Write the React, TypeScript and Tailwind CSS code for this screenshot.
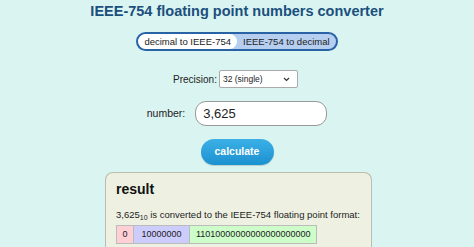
import { useState } from "react";

export default function App() {
    const [mode, setMode] = useState("dec");
    const [num, setNum] = useState("3,625");

    return (
        <div className="w-[474px] h-[247px] overflow-hidden bg-[#d9f4f1] flex flex-col items-center" style={{ fontFamily: '"Liberation Sans", Arial, sans-serif' }}>
            <h1 className="shrink-0 mt-[1px] text-[14.5px] leading-[20px] font-bold text-[#1b4f7c]">IEEE-754 floating point numbers converter</h1>

            {/* mode toggle */}
            <div className="shrink-0 mt-[11px] flex rounded-full border-2 border-[#2a62a6] bg-[#b6cff1] overflow-hidden">
                <button onClick={() => setMode("dec")} className={`h-[15px] px-[6px] text-[9.5px] leading-[15px] text-[#222] rounded-full ${mode === "dec" ? "bg-white" : ""}`}>decimal to IEEE-754</button>
                <button onClick={() => setMode("ieee")} className={`h-[15px] px-[6px] text-[9.5px] leading-[15px] text-[#222] rounded-full ${mode === "ieee" ? "bg-white" : ""}`}>IEEE-754 to decimal</button>
            </div>

            {/* precision */}
            <div className="shrink-0 mt-[19px] -ml-[3px] flex items-center gap-[2px]">
                <span className="text-[10px] text-[#222]">Precision:</span>
                <div className="relative w-[79px] h-[18px] bg-white border border-[#aaa] rounded-[2px] flex items-center">
                    <span className="pl-[3px] text-[8.5px] text-[#222]">32 (single)</span>
                    <svg className="absolute right-[7px] top-[6px]" width="7" height="5" viewBox="0 0 7 5"><path d="M1 1l2.5 2.5L6 1" stroke="#333" strokeWidth="1.2" fill="none" /></svg>
                </div>
            </div>

            {/* number */}
            <div className="shrink-0 mt-[13px] flex items-center gap-[10px]">
                <span className="text-[10.5px] text-[#222]">number:</span>
                <input value={num} onChange={e => setNum(e.target.value)} className="w-[132px] h-[25px] rounded-[11px] bg-white border border-[#999] px-[7px] text-[13px] text-[#222] outline-none" />
            </div>

            <button className="shrink-0 mt-[13px] w-[73px] h-[26px] rounded-full bg-gradient-to-b from-[#3bb0e6] to-[#1a91d0] text-white font-bold text-[10.5px] shadow-[0_1px_1px_rgba(0,0,0,0.15)]">calculate</button>

            {/* result */}
            <div className="shrink-0 mt-[7px] ml-[3px] w-[267px] h-[80px] rounded-t-[8px] border border-b-0 border-[#b9bfae] bg-[#eef1e2] px-[10px] pt-[7px]">
                <h2 className="text-[14px] leading-[18px] font-bold text-[#111]">result</h2>
                <p className="mt-[11px] whitespace-nowrap text-[9.5px] leading-[12px] text-[#222]">3,625<sub className="text-[7px]">10</sub> is converted to the IEEE-754 floating point format:</p>
                <div className="mt-[4px] flex h-[19px] text-[9px] text-[#222] border border-[#bbb] w-fit">
                    <div className="w-[17px] bg-[#ffcfd6] flex items-center justify-center border-r border-[#bbb]">0</div>
                    <div className="w-[56px] bg-[#cdcdfd] flex items-center justify-center border-r border-[#bbb]">10000000</div>
                    <div className="px-[6px] bg-[#cdfec9] flex items-center">11010000000000000000000</div>
                </div>
            </div>
        </div>
    );
}
